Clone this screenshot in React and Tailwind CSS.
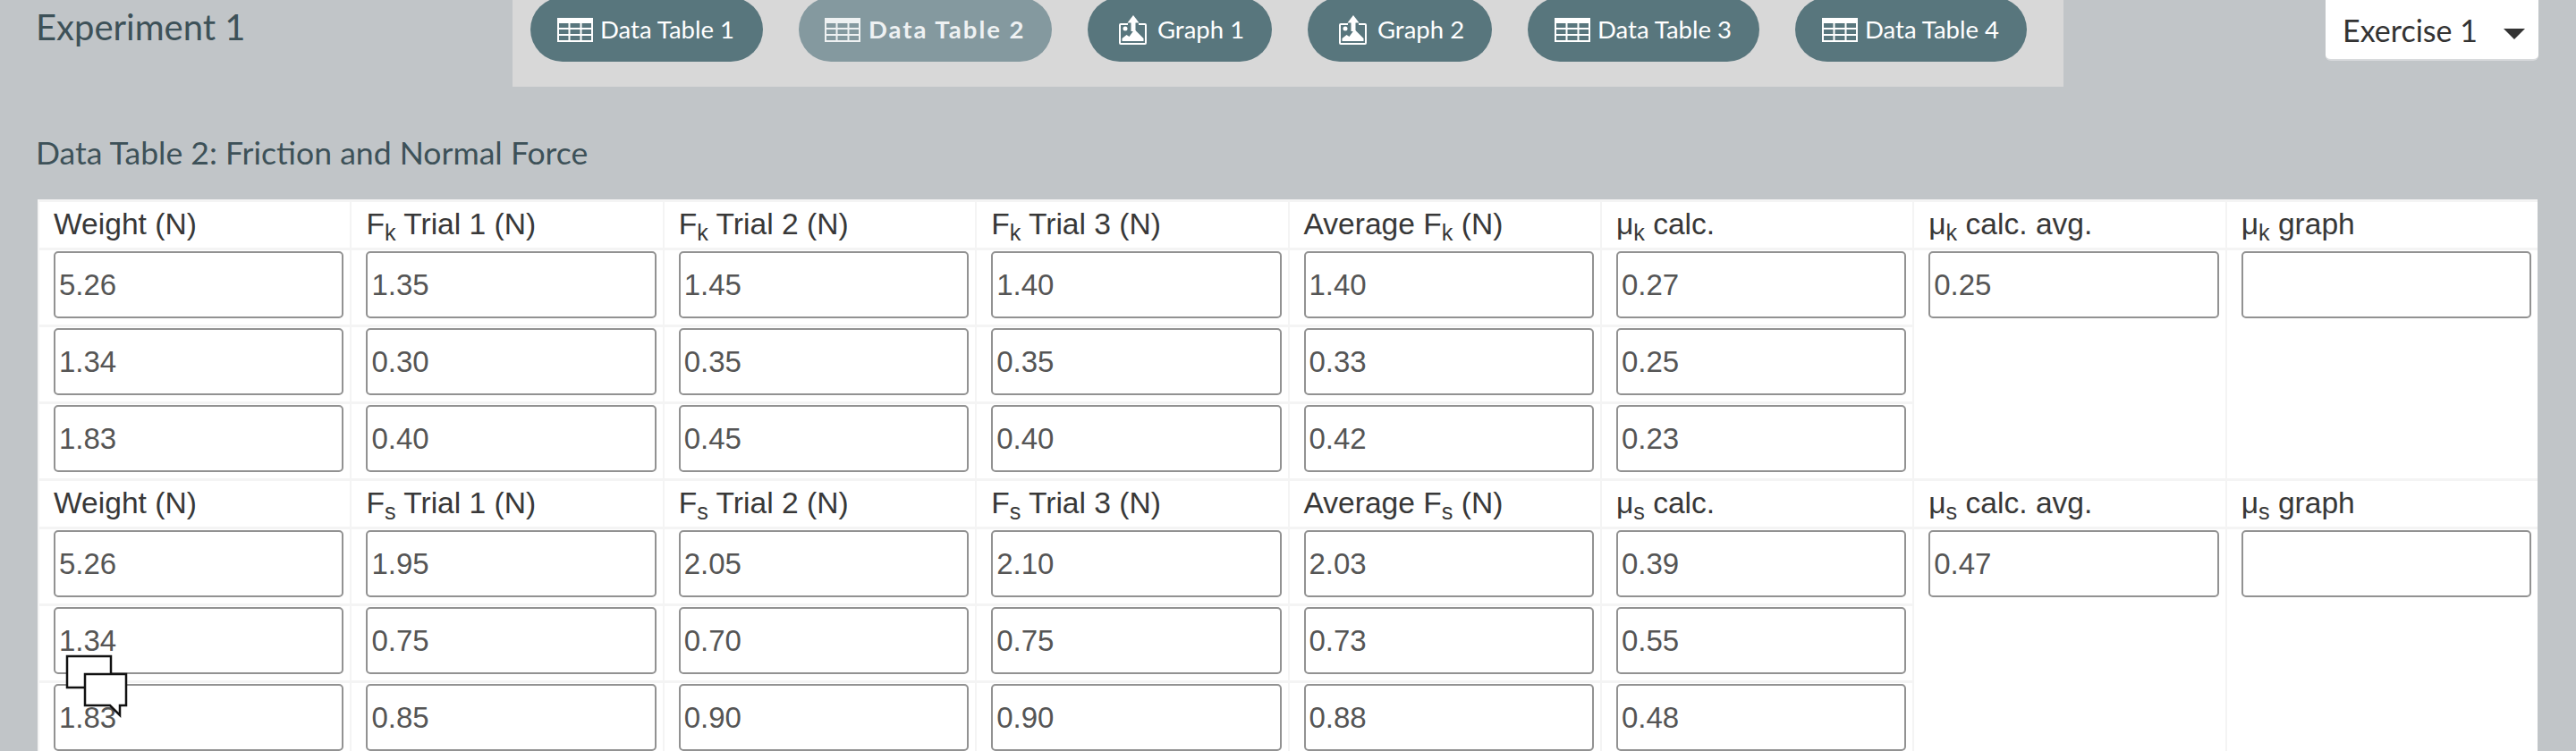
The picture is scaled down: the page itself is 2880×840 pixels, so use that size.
import React from "react";

const lato = "font-['Lato',sans-serif]";

const TableIcon = () => (
  <svg width="40" height="27" viewBox="0 0 40 27" className="shrink-0">
    <path
      fill="currentColor"
      fillRule="evenodd"
      d="M0 0h40v27H0z M2 6v5h10.500V6z M14.500 6v5h11V6z M27.500 6v5H38V6z M2 13v5h10.500v-5z M14.500 13v5h11v-5z M27.500 13v5H38v-5z M2 20v5h10.500v-5z M14.500 20v5h11v-5z M27.500 20v5H38v-5z"
    />
  </svg>
);

const GraphIcon = () => (
  <svg width="32" height="33" viewBox="0 0 32 33" className="shrink-0">
    <path
      d="M10 10H2a1 1 0 0 0-1 1v20a1 1 0 0 0 1 1h27a1 1 0 0 0 1-1V11a1 1 0 0 0-1-1h-7"
      fill="none"
      stroke="currentColor"
      strokeWidth="2"
    />
    <path fill="currentColor" d="M16 0l6.500 8.500h-4V18h-5V8.500h-4z" />
    <circle cx="7" cy="15" r="2.500" fill="currentColor" />
    <path fill="currentColor" d="M3.500 29v-3l5-4 3 2 5-7h2l9 9v3z" />
  </svg>
);

const tabs = [
  { label: "Data Table 1", icon: TableIcon, w: "w-[260px] pl-[30px] gap-[8px]" },
  { label: "Data Table 2", icon: TableIcon, w: "w-[283px] pl-[29px] gap-[9px]", active: true },
  { label: "Graph 1", icon: GraphIcon, w: "w-[206px] pl-[35px] gap-[11px]" },
  { label: "Graph 2", icon: GraphIcon, w: "w-[206px] pl-[35px] gap-[11px]" },
  { label: "Data Table 3", icon: TableIcon, w: "w-[259px] pl-[30px] gap-[8px]" },
  { label: "Data Table 4", icon: TableIcon, w: "w-[259px] pl-[30px] gap-[8px]" },
];

const Sym = ({ a, b }) => (
  <>
    {a}
    <sub>{b}</sub>
  </>
);

const headers = (k) => [
  "Weight (N)",
  <><Sym a="F" b={k} /> Trial 1 (N)</>,
  <><Sym a="F" b={k} /> Trial 2 (N)</>,
  <><Sym a="F" b={k} /> Trial 3 (N)</>,
  <>Average <Sym a="F" b={k} /> (N)</>,
  <><Sym a="μ" b={k} /> calc.</>,
  <><Sym a="μ" b={k} /> calc. avg.</>,
  <><Sym a="μ" b={k} /> graph</>,
];

const kinetic = [
  ["5.26", "1.35", "1.45", "1.40", "1.40", "0.27", "0.25", ""],
  ["1.34", "0.30", "0.35", "0.35", "0.33", "0.25"],
  ["1.83", "0.40", "0.45", "0.40", "0.42", "0.23"],
];

const stat = [
  ["5.26", "1.95", "2.05", "2.10", "2.03", "0.39", "0.47", ""],
  ["1.34", "0.75", "0.70", "0.75", "0.73", "0.55"],
  ["1.83", "0.85", "0.90", "0.90", "0.88", "0.48"],
];

const Cell = ({ value, span }) => (
  <div
    className={
      "border-b-[3px] border-l-2 border-[#f4f4f4] pt-px pr-[7px] pl-[16px] " +
      (span ? "row-span-3" : "h-[86px]")
    }
  >
    <input
      readOnly
      value={value}
      className="h-[75px] w-full rounded-[5px] border-2 border-[#929292] bg-white px-[4px] text-[33px] text-[#555] outline-none"
    />
  </div>
);

const Block = ({ k, rows }) => (
  <>
    {headers(k).map((h, i) => (
      <div
        key={i}
        className="flex h-[54px] items-center whitespace-nowrap border-b-[3px] border-l-2 border-[#f4f4f4] pl-[16px] text-[33.600px] leading-none text-[#383838]"
      >
        <span className="-mt-px">{h}</span>
      </div>
    ))}
    {rows.map((row, r) =>
      row.map((v, c) => <Cell key={r + "-" + c} value={v} span={c > 5} />)
    )}
  </>
);

const App = () => {
  return (
    <div className={"relative h-[840px] w-[2880px] overflow-hidden bg-[#c1c5c8] " + lato}>
      {/* top row, page is scrolled a little so the pills are cut off */}
      <div className="flex h-[97px] items-start pl-[40px]">
        <div className="w-[533px] pt-[7px] text-[40px] leading-[46px] text-[#3d5158]">Experiment 1</div>
        <div className="flex h-[97px] w-[1734px] gap-[40px] bg-[#d8d8d8] px-[20px]">
          {tabs.map((t) => (
            <div
              key={t.label}
              className={
                "-mt-[3px] flex h-[72px] items-center rounded-[36px] text-[27.500px] " +
                t.w +
                " " +
                (t.active
                  ? "bg-[#84999f] font-bold tracking-[2px] text-[#eef1f2]"
                  : "bg-[#58767d] text-white")
              }
            >
              <t.icon />
              <span>{t.label}</span>
            </div>
          ))}
        </div>
        <div className="ml-[293px] flex h-[68px] w-[238px] items-center rounded-b-[6px] border-b-2 border-[#d8dadc] bg-white pr-[15px] pl-[19px] text-[34px] text-[#333]">
          <span>Exercise 1</span>
          <span className="mt-[10px] ml-auto h-0 w-0 border-x-[12px] border-t-[12px] border-x-transparent border-t-[#333]" />
        </div>
      </div>

      <h2 className="mt-[54px] pl-[40px] text-[35.600px] leading-[40px] font-normal text-[#3d5158]">
        Data Table 2: Friction and Normal Force
      </h2>

      <div className="mt-[32px] ml-[42px] grid w-[2795px] grid-cols-8 border-t-[3px] border-[#f4f4f4] bg-white font-['Liberation_Sans',sans-serif]">
        <Block k="k" rows={kinetic} />
        <Block k="s" rows={stat} />
      </div>

      {/* the two speech bubbles lying over the first column */}
      <svg width="72" height="72" viewBox="0 0 72 72" className="absolute top-[732px] left-[72px]">
        <rect x="3" y="2" width="49" height="35" fill="#fff" stroke="#111" strokeWidth="2.500" />
        <path d="M23 22H69V57H62V68L51 57H23Z" fill="#fff" stroke="#111" strokeWidth="2.500" />
      </svg>
    </div>
  );
};

export default App;
